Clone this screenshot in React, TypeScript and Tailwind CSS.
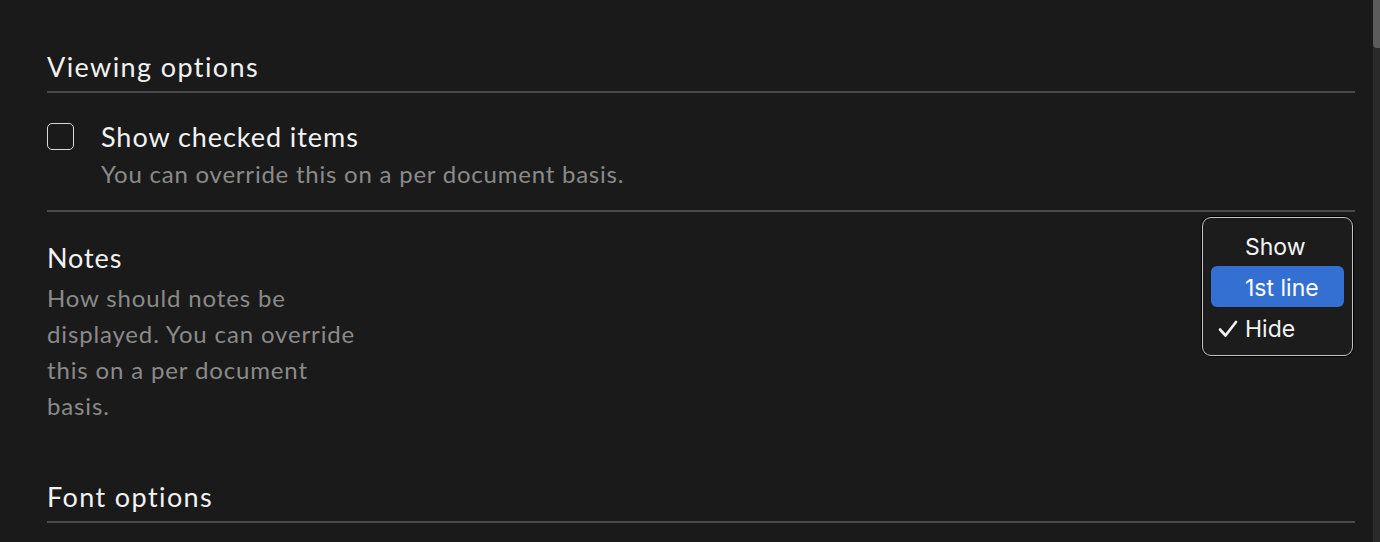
import React from "react";

const lato = { fontFamily: "Lato, 'Noto Sans', sans-serif" };

const menuItems = [
  { label: "Show", checked: false, active: false },
  { label: "1st line", checked: false, active: true },
  { label: "Hide", checked: true, active: false },
];

const CheckMark = () => (
  <svg width="20" height="18" viewBox="0 0 20 18" fill="none">
    <path d="M2 9.5 L7.5 15.5 L18 2" stroke="currentColor" strokeWidth="2.6" strokeLinecap="round" strokeLinejoin="round" />
  </svg>
);

export default function App() {
  return (
    <div className="relative flex h-[542px] w-[1380px] overflow-hidden bg-[#1a1a1a]" style={lato}>
      <div className="flex-1 pl-[47px] pr-[18px]">
        {/* Viewing options */}
        <div className="pt-[49px]">
          <h2 className="text-[27px] leading-[36px] tracking-[1.4px] text-[#f2f2f2]">Viewing options</h2>
          <div className="mt-[6px] h-[2px] bg-[#4a4a4a]" />
        </div>

        <div className="flex gap-[27px] pt-[29px]">
          <div className="mt-[1px] h-[27px] w-[27px] shrink-0 rounded-[5px] border-[1.5px] border-[#d8d8d8]" />
          <div>
            <p className="text-[27px] leading-[30px] tracking-[0.95px] text-[#f2f2f2]">Show checked items</p>
            <p className="mt-[7px] text-[24px] leading-[30px] tracking-[0.77px] text-[#8a8a8a]">You can override this on a per document basis.</p>
          </div>
        </div>
        <div className="mt-[21px] h-[2px] bg-[#4a4a4a]" />

        {/* Notes */}
        <div className="pt-[28px]">
          <p className="text-[27px] leading-[36px] tracking-[0.9px] text-[#f2f2f2]">Notes</p>
          <p className="mt-[4px] w-[318px] text-[24px] leading-[36px] tracking-[0.85px] text-[#8a8a8a]">
            How should notes be displayed. You can override this on a per document basis.
          </p>
        </div>

        {/* Font options */}
        <div className="pt-[55px]">
          <h2 className="text-[27px] leading-[36px] tracking-[1.4px] text-[#f2f2f2]">Font options</h2>
          <div className="mt-[6px] h-[2px] bg-[#4a4a4a]" />
        </div>
      </div>

      {/* scrollbar */}
      <div className="w-[7px] shrink-0 bg-[#2a2a2a]">
        <div className="h-[48px] w-full rounded-bl-[4px] bg-[#5c5c5c]" />
      </div>

      {/* popup menu */}
      <div
        className="absolute left-[1202px] top-[217px] w-[151px] rounded-[9px] border-[1.5px] border-[#c4c4c4] bg-[#1c1c1c] px-[8px] pt-[7px] pb-[7px] shadow-[0_0_0_1px_#000]"
        style={{ fontFamily: "Inter, 'Liberation Sans', sans-serif" }}
      >
        {menuItems.map((item) => (
          <div
            key={item.label}
            className={
              item.active
                ? "flex h-[41px] items-center rounded-[6px] bg-[#3470d2] text-white"
                : "flex h-[41px] items-center text-[#f4f4f4]"
            }
          >
            <span className="flex w-[34px] pl-[7px] pt-[2px]">{item.checked ? <CheckMark /> : null}</span>
            <span className="pt-[3px] text-[23px] leading-none">{item.label}</span>
          </div>
        ))}
      </div>
    </div>
  );
}
